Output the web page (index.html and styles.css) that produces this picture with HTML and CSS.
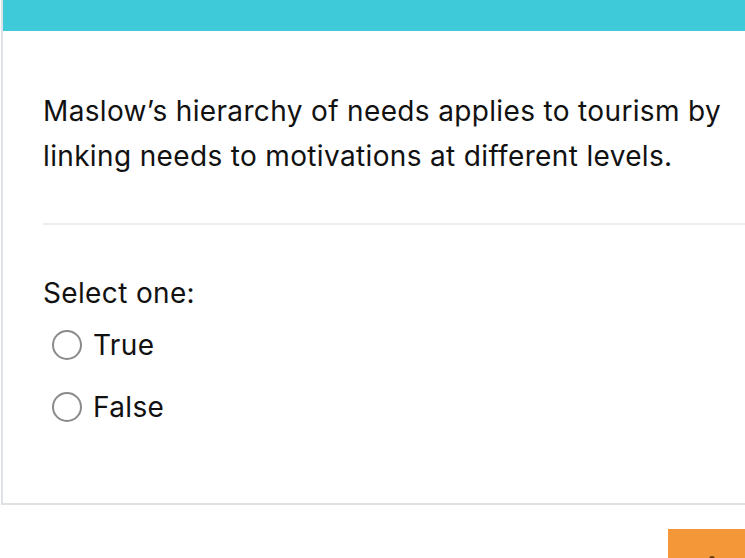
FILE: index.html
```html
<!DOCTYPE html>
<html>
<head>
<meta charset="utf-8">
<link rel="stylesheet" href="styles.css">
</head>
<body>
<div class="card">
  <div class="card-head"></div>
  <div class="card-body">
    <p class="question">Maslow’s hierarchy of needs applies to tourism by linking needs to motivations at different levels.</p>
    <hr class="divider">
    <div class="prompt">Select one:</div>
    <div class="options">
      <label class="option"><span class="radio"></span><span class="label">True</span></label>
      <label class="option"><span class="radio"></span><span class="label">False</span></label>
    </div>
  </div>
</div>
<div class="footer">
  <div class="next-btn"><span class="btn-icon"></span></div>
</div>
</body>
</html>
```
FILE: styles.css
```css
html, body {
  margin: 0;
  padding: 0;
  background: #fff;
  overflow: hidden;
  width: 745px;
  height: 558px;
}
body {
  font-family: Inter, "Liberation Sans", Arial, sans-serif;
  color: #111;
  letter-spacing: 0.35px;
}
.card {
  margin-left: 1px;
  width: 800px;
  border-left: 2px solid #dee2e6;
  border-bottom: 2px solid #dee2e6;
  box-sizing: border-box;
}
.card-head {
  height: 31px;
  background: #3fcad9;
}
.card-body {
  padding: 58px 0 0 40px;
  height: 472px;
  box-sizing: border-box;
}
.question {
  margin: 0;
  font-size: 28px;
  line-height: 45px;
  width: 690px;
}
.divider {
  margin: 44px 0 0 0;
  border: 0;
  border-top: 2px solid #ebedef;
}
.prompt {
  margin-top: 52px;
  font-size: 28px;
  line-height: 32px;
}
.options {
  display: flex;
  flex-direction: column;
  gap: 30px;
  margin-top: 20px;
  padding-left: 9px;
}
.option {
  display: flex;
  align-items: center;
  gap: 11px;
  height: 32px;
  font-size: 28px;
}
.radio {
  width: 26px;
  height: 26px;
  border: 2.5px solid #8a8a8a;
  border-radius: 50%;
  flex: none;
}
.footer {
  display: flex;
  justify-content: flex-end;
  padding-top: 24px;
}
.next-btn {
  width: 77px;
  height: 40px;
  background: #f39738;
  display: flex;
  justify-content: center;
  padding-top: 27px;
  box-sizing: border-box;
  padding-left: 10px;
}
.btn-icon {
  width: 6px;
  height: 6px;
  border-radius: 3px;
  background: #6b3a12;
}
```
